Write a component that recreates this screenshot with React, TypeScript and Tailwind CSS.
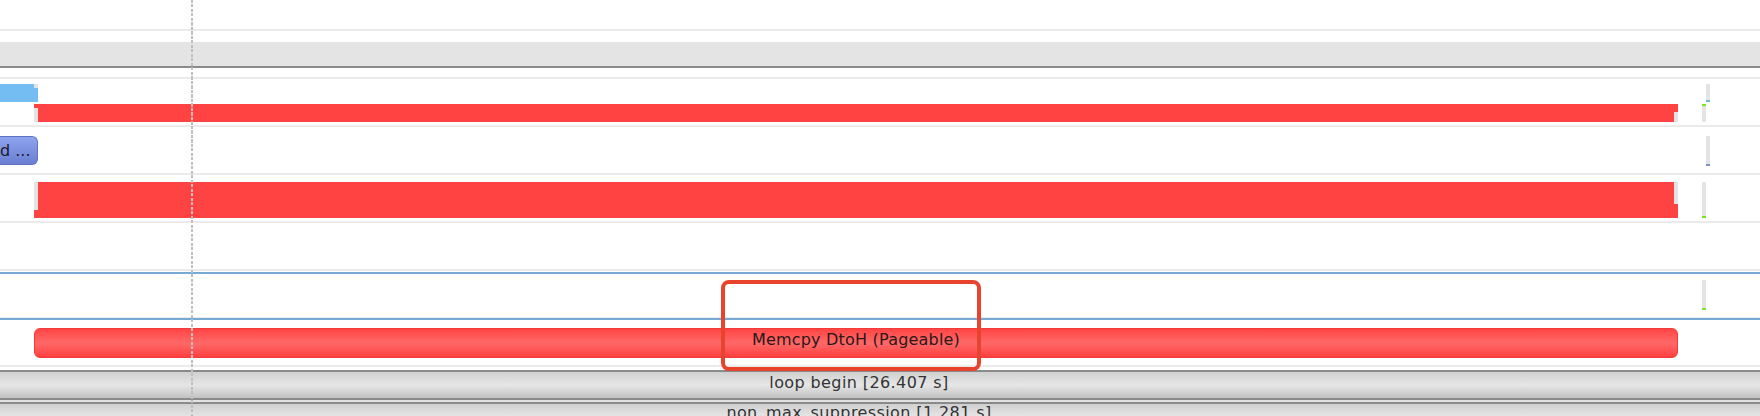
import React from "react";

// timeline lanes, top to bottom
const LINE = "h-[2px] shrink-0 bg-[#ebebeb]";
const BLUE_LINE = "h-[2px] shrink-0 bg-[#78a9d4]";
const DARK_LINE = "h-[2px] shrink-0 bg-[#8a8a8a]";
const RANGE =
  "flex h-[26px] shrink-0 items-center justify-center whitespace-nowrap bg-gradient-to-b from-[#d0d0d0] via-[#e6e6e6] to-[#c2c2c2] pr-[42px] text-[16px] leading-none tracking-[0.4px] text-[#333]";

function Marker({ h, tip, top = false }: { h: string; tip: string; top?: boolean }) {
  return (
    <div className={`flex w-[4px] shrink-0 flex-col ${h}`}>
      {top && <div className={`h-[2px] ${tip}`} />}
      <div className="flex-1 bg-[#e4e4e4]" />
      {!top && <div className={`h-[2px] ${tip}`} />}
    </div>
  );
}

export default function App() {
  return (
    <div className="relative h-[416px] w-[1760px] overflow-hidden bg-white font-['DejaVu_Sans',sans-serif]">
      <div className="flex h-full flex-col">
        <div className="h-[29px] shrink-0" />
        <div className={LINE} />
        <div className="h-[11px] shrink-0" />
        <div className="h-[24px] shrink-0 bg-[#e4e4e4]" />
        <div className={DARK_LINE} />
        <div className="h-[9px] shrink-0" />
        <div className={LINE} />
        <div className="h-[5px] shrink-0" />

        {/* lane 1: blue stub + red kernel */}
        <div className="flex h-[18px] shrink-0">
          <div className="w-[34px] bg-[#74bdf2]" />
          <div className="flex w-[4px] flex-col">
            <div className="h-[4px] bg-[#e4e4e4]" />
            <div className="flex-1 bg-[#74bdf2]" />
          </div>
          <div className="ml-[1668px]">
            <Marker h="h-[18px]" tip="bg-[#6cb4ec]" />
          </div>
        </div>
        <div className="h-[2px] shrink-0" />
        <div className="flex h-[18px] shrink-0">
          <div className="ml-[34px] flex w-[1644px]">
            <div className="flex w-[4px] flex-col">
              <div className="h-[4px] bg-[#ff4242]" />
              <div className="flex-1 bg-[#e4e4e4]" />
            </div>
            <div className="flex-1 bg-[#ff4242]" />
            <div className="flex w-[4px] flex-col">
              <div className="h-[8px] bg-[#ff4242]" />
              <div className="flex-1 bg-[#e4e4e4]" />
            </div>
          </div>
          <div className="ml-[24px]">
            <Marker h="h-[18px]" tip="bg-[#78e81e]" top />
          </div>
        </div>
        <div className="h-[3px] shrink-0" />
        <div className={LINE} />
        <div className="h-[9px] shrink-0" />

        {/* lane 2: api call pill */}
        <div className="flex h-[30px] shrink-0">
          <div className="flex h-[29px] w-[38px] items-center overflow-hidden whitespace-nowrap rounded-r-[6px] border border-l-0 border-[#5f72c4] bg-gradient-to-b from-[#8ea4ee] to-[#6a7fd2] text-[16px] leading-none text-[#1b1b2b]">
            d ...
          </div>
          <div className="ml-[1668px]">
            <Marker h="h-[30px]" tip="bg-[#7f8fd0]" />
          </div>
        </div>
        <div className="h-[7px] shrink-0" />
        <div className={LINE} />
        <div className="h-[7px] shrink-0" />

        {/* lane 3: big red kernel */}
        <div className="flex h-[36px] shrink-0">
          <div className="ml-[34px] flex w-[1644px]">
            <div className="flex w-[4px] flex-col">
              <div className="h-[28px] bg-[#e4e4e4]" />
              <div className="flex-1 bg-[#ff4242]" />
            </div>
            <div className="flex-1 bg-[#ff4242]" />
            <div className="flex w-[4px] flex-col">
              <div className="h-[22px] bg-[#e4e4e4]" />
              <div className="flex-1 bg-[#ff4242]" />
            </div>
          </div>
          <div className="ml-[24px]">
            <Marker h="h-[36px]" tip="bg-[#78e81e]" />
          </div>
        </div>
        <div className="h-[3px] shrink-0" />
        <div className={LINE} />
        <div className="h-[46px] shrink-0" />
        <div className={LINE} />
        <div className="h-[1px] shrink-0" />
        <div className={BLUE_LINE} />
        <div className="h-[6px] shrink-0" />

        {/* lane 4: empty stream */}
        <div className="flex h-[30px] shrink-0">
          <div className="ml-[1702px]">
            <Marker h="h-[30px]" tip="bg-[#78e81e]" />
          </div>
        </div>
        <div className="h-[7px] shrink-0" />
        <div className="h-[1px] shrink-0 bg-[#ebebeb]" />
        <div className={BLUE_LINE} />
        <div className="h-[8px] shrink-0" />

        {/* lane 5: memcpy */}
        <div className="flex h-[30px] shrink-0">
          <div className="ml-[34px] flex w-[1644px] items-center justify-center rounded-[6px] border border-[#f23c3c] bg-gradient-to-b from-[#ff4444] via-[#ff6868] to-[#ff3e3e] pb-[6px] text-[16px] leading-none tracking-[0.2px] text-[#2a1818]">
            Memcpy DtoH (Pageable)
          </div>
        </div>
        <div className="h-[7px] shrink-0" />
        <div className={LINE} />
        <div className="h-[3px] shrink-0" />

        {/* NVTX ranges */}
        <div className={DARK_LINE} />
        <div className={`${RANGE} pb-[4px]`}>loop begin [26.407 s]</div>
        <div className={DARK_LINE} />
        <div className="h-[2px] shrink-0 bg-[#e2e2e2]" />
        <div className={DARK_LINE} />
        <div className={`${RANGE} pb-[8px]`}>non_max_suppression [1.281 s]</div>
      </div>

      {/* cursor line */}
      <div className="pointer-events-none absolute left-[191px] top-0 h-full w-[2px] bg-[repeating-linear-gradient(to_bottom,#bfbfbf_0px,#bfbfbf_3px,transparent_3px,transparent_4.5px)]" />

      {/* annotation box */}
      <div className="pointer-events-none absolute left-[721px] top-[280px] h-[91px] w-[260px] rounded-[8px] border-4 border-[#e8432c]" />
    </div>
  );
}
